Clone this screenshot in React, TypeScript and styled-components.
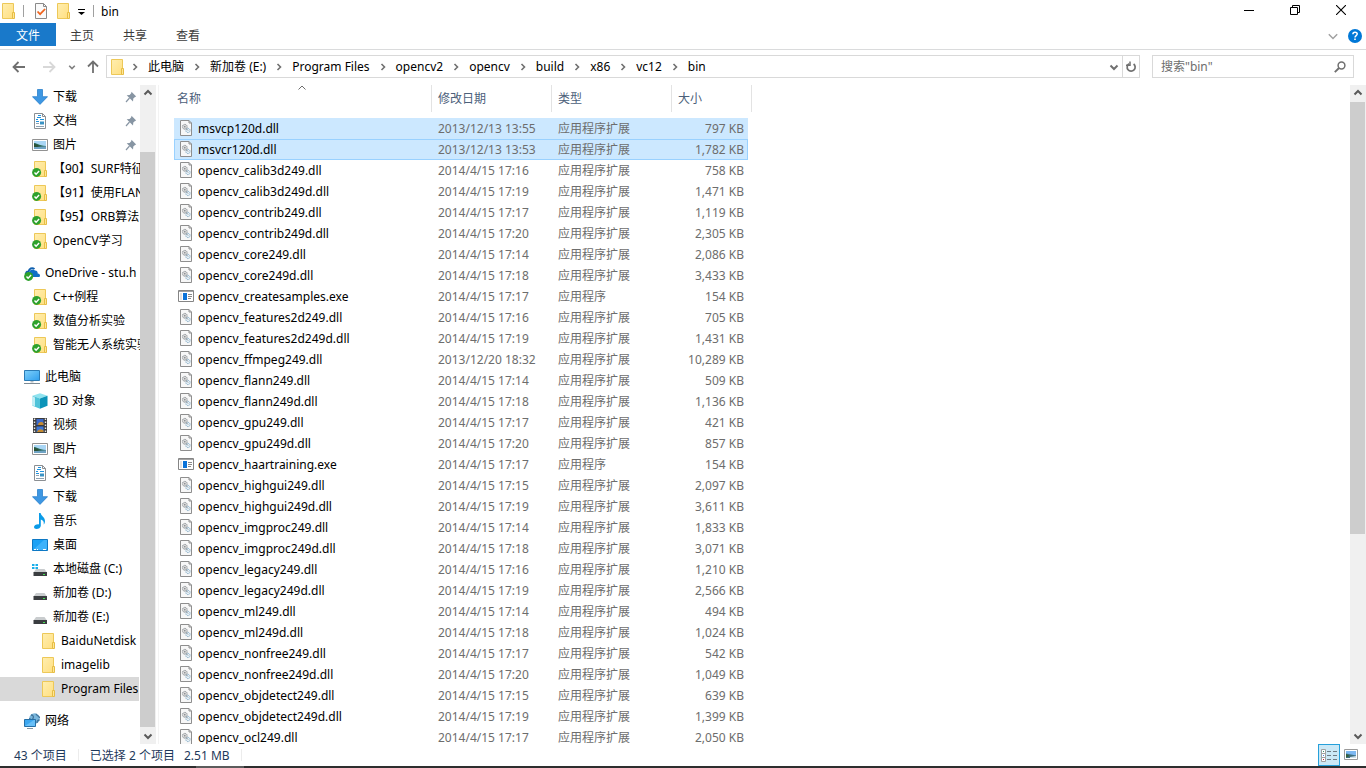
import React from "react";
import styled, { createGlobalStyle, css } from "styled-components";

const GlobalStyle = createGlobalStyle`
  * { box-sizing: border-box; }
  body {
    margin: 0;
    background: #fff;
    color: #000;
    font: 12px/20px "Noto Sans", "Noto Sans CJK SC", sans-serif;
  }
  button, input { font: inherit; color: inherit; }
  button { border: 0; padding: 0; background: none; }
  a { color: inherit; text-decoration: none; }
  svg { display: block; flex: none; }
`;

/* ---------- icons ---------- */

const Svg = ({ w = 16, h = 16, children }: { w?: number; h?: number; children: React.ReactNode }) => (
  <svg width={w} height={h} viewBox={`0 0 ${w} ${h}`} fill="none" aria-hidden="true">
    {children}
  </svg>
);

const folderShape = (
  <>
    <path d="M2.500 .5h11v15h-11z" fill="url(#folderFill)" stroke="#edc858" />
    <path d="M12.500 9.500h2v6h-2z" fill="#ffe696" stroke="#e6bd45" />
  </>
);

const syncBadge = (
  <>
    <circle cx="4.600" cy="11.400" r="4.500" fill="#2ea12c" />
    <path d="M2.500 11.600l1.600 1.700 3-3.300" stroke="#fff" strokeWidth="1.400" />
  </>
);

const FolderIcon = () => <Svg>{folderShape}</Svg>;
const SyncedFolderIcon = () => (
  <Svg>
    {folderShape}
    {syncBadge}
  </Svg>
);
const PropertiesIcon = () => (
  <Svg>
    <path d="M2.500 .5h8l3 3v12h-11z" fill="#fafafa" stroke="#8a8a8a" />
    <path d="M10.500 .5v3h3" stroke="#8a8a8a" />
    <path d="M4.500 8.500l2.600 2.700 5-5.200" stroke="#f0641e" strokeWidth="1.800" />
  </Svg>
);
const DownloadIcon = () => (
  <Svg>
    <path d="M5.500 .5h5v7.200h5L8 15.400.5 7.700h5z" fill="#3d97e3" stroke="#2b80cc" strokeWidth=".8" />
  </Svg>
);
const DocumentIcon = () => (
  <Svg>
    <path d="M2.500 .5h8l3 3v12h-11z" fill="#fff" stroke="#8b8f93" />
    <path d="M10.500 .5v3h3" stroke="#8b8f93" />
    <path d="M6 2.500h3M5 4.500h4M4 6.500h2M8 6.500h4M4 8.500h3" stroke="#1f92dd" />
    <path d="M4 10.500h3M4 13.500h8" stroke="#8fa3b3" />
    <path d="M8 8.500h4v3H8z" fill="#3a93c4" />
  </Svg>
);
const PictureIcon = () => (
  <Svg>
    <path d="M.5 2.500h15v11H.5z" fill="#fff" stroke="#929292" />
    <path d="M2 4h12v8H2z" fill="#a9d6f5" />
    <path d="M2 6c3 0 4 2.500 12 3v1H2z" fill="#2b6a58" />
    <path d="M2 7c3 .2 4 1.800 7 2.200L2 10.500z" fill="#2b5238" />
    <path d="M2 10.200l12-1V12H2z" fill="#6fa3c4" />
  </Svg>
);
const CloudIcon = () => (
  <Svg>
    <path d="M5 12V8.500C4.600 5 8.500 3 11 5.500c2.200.2 2.800 1.600 2.700 3 1.800.2 2.300 1.200 2.300 2.200 0 .8-.6 1.300-1.400 1.300z" fill="#0f6fc6" />
    <path d="M2 10c-.8-2 .8-3.700 2.500-3.500C5.200 3.500 8 2 10.500 4" stroke="#0f5fae" strokeWidth="1.800" />
    {syncBadge}
  </Svg>
);
const ComputerIcon = () => (
  <Svg>
    <path d="M.5 1.500h15v10H.5z" fill="url(#screenFill)" stroke="#2b7bb5" />
    <path d="M6.500 12h3v1.500h-3z" fill="#b5bcc2" />
    <path d="M0 14.500h16" stroke="#7d8a94" />
  </Svg>
);
const CubeIcon = () => (
  <Svg>
    <path d="M8 .3l7.500 2.500L8 5.500.5 2.800z" fill="#8fe3ef" />
    <path d="M.5 2.800L8 5.500v10.200L.5 12.800z" fill="#4fc3d9" />
    <path d="M0 3l3 1.500v9L0 12z" fill="#c2eef5" />
    <path d="M15.500 2.800L8 5.500v10.200l7.500-2.900z" fill="#0b93b8" />
  </Svg>
);
const VideoIcon = () => (
  <Svg>
    <path d="M1 1h14v15H1z" fill="#3b3b3b" />
    <path d="M2.500 1.500v14M13.500 1.500v14" stroke="#e8e8e8" strokeWidth="1.400" strokeDasharray="1.500 1.500" />
    <path d="M4.500 2h7v6h-7z" fill="#3a68c9" />
    <path d="M4.500 9.500h7V15h-7z" fill="#3a76d8" />
    <path d="M6 8c0-3 4-4 5.500-1.500V8zM5 15c1-3 4-3.500 6.500-1.500V15z" fill="#c58a2f" />
  </Svg>
);
const MusicIcon = () => (
  <Svg>
    <path d="M7 0h1.600c.4 3 4.400 4.200 4.400 8 0 1.500-.5 2.800-1.300 3.600.5-2.600-.5-4.300-2.900-5.100v6.200C8.800 14.700 6.500 16 4.500 16 3 16 2 15.200 2 14c0-1.700 2.600-3 5-2.600z" fill="#0a9be8" />
  </Svg>
);
const DesktopIcon = () => (
  <Svg>
    <path d="M.5 2.500h15v11H.5z" fill="#1ba1f5" stroke="#0d78c4" />
    <path d="M1 13L12 3h3v10z" fill="#3db2fb" />
    <path d="M2 12.500h2m1 0h1m5 0h3" stroke="#fff" />
  </Svg>
);
const diskShape = (
  <>
    <path d="M4 8h8.500l2.500 3.500H1.500z" fill="#c9ccce" />
    <path d="M1.500 11h13.500v4H1.500z" fill="#3a3d40" />
    <path d="M11 13.500h2" stroke="#45e052" />
  </>
);
const DiskIcon = () => <Svg>{diskShape}</Svg>;
const SystemDiskIcon = () => (
  <Svg>
    {diskShape}
    <path d="M0 3h2.500v2H0zM3.500 3H6v2H3.500zM0 6h2.500v2H0zM3.500 6H6v2H3.500z" fill="#1aaeea" />
  </Svg>
);
const NetworkIcon = () => (
  <Svg>
    <circle cx="10.500" cy="5.500" r="5.300" fill="#79b6dc" />
    <path d="M7 2c2 0 3 1.500 2 3.500S6 7 5.500 5M12 .8c.2 2 3.500 2 3.600 4.200M13 10c0-2 1-3 2.500-3" stroke="#42749a" strokeWidth="1.300" />
    <path d="M.5 6.500h11v7H.5z" fill="#3ca7f0" stroke="#256fa6" />
    <path d="M1 13l9-6h1v6z" fill="#67bff8" />
    <path d="M3 15.500h6" stroke="#8696a2" />
  </Svg>
);
const PinIcon = () => (
  <Svg w={12} h={12}>
    <path d="M6.500 .8l4.700 4.700-1.200.4-1.700 1.700-.3 2.900L1.700 4.300l2.900-.3 1.600-1.700z" fill="#8795a3" />
    <path d="M4.500 7L1 11" stroke="#8795a3" strokeWidth="1.200" />
  </Svg>
);
const DllIcon = () => (
  <Svg>
    <path d="M2.500 .5h8.500l2.500 2.500v12.500h-11z" fill="#f7f7f7" stroke="#8e8e8e" />
    <path d="M11 .5v2.500h2.500" stroke="#8e8e8e" />
    <circle cx="6.800" cy="6.800" r="2.400" fill="#dadada" stroke="#858b90" strokeDasharray="1 .5" />
    <circle cx="6.800" cy="6.800" r=".8" fill="#7a7f84" />
    <circle cx="10" cy="10.500" r="2.100" fill="#e6f1f8" stroke="#83a9c4" strokeDasharray="1 .5" />
    <path d="M8 8.500l2 2" stroke="#858b90" />
  </Svg>
);
const ExeIcon = () => (
  <Svg>
    <path d="M.5 2.500h15v11H.5z" fill="#fff" stroke="#858585" />
    <path d="M1 3.500h14" stroke="#a3a3a3" />
    <path d="M2 5h2v7H2z" fill="#e4e4e4" />
    <path d="M5 5h4v7H5z" fill="#0b73d9" />
    <path d="M10 6.500h4M10 8.500h4M10 10.500h3" stroke="#8a8a8a" />
  </Svg>
);
const Chevron = ({ size = 10, dir, color = "#5a5a5a", weight = 1.6 }: { size?: number; dir: "up" | "down" | "right"; color?: string; weight?: number }) => {
  const d = { up: "M1.500 6.500L5 3l3.500 3.500", down: "M1.500 3.500L5 7l3.500-3.500", right: "M3.500 2L6.500 5l-3 3" }[dir];
  return (
    <svg width={size} height={size} viewBox="0 0 10 10" fill="none" aria-hidden="true">
      <path d={d} stroke={color} strokeWidth={weight} />
    </svg>
  );
};
const Arrow = ({ turn, color }: { turn: number; color: string }) => (
  <Svg w={14} h={14}>
    <path transform={`rotate(${turn} 7 7)`} d="M13 7H2M6.500 2L1.500 7l5 5" stroke={color} strokeWidth="1.800" />
  </Svg>
);

/* ---------- window frame ---------- */

const Window = styled.div`
  display: flex;
  flex-direction: column;
  height: 100vh;
  overflow: hidden;
`;
const TitleBar = styled.header`
  display: flex;
  align-items: flex-start;
  height: 23px;
  padding-right: 2px;
`;
const QuickAccess = styled.div`
  display: flex;
  align-items: center;
  flex: 1;
  height: 22px;
`;
const Divider = styled.span<{ $space: number; $color?: string }>`
  align-self: center;
  width: 1px;
  height: 12px;
  margin: 0 ${(p) => p.$space}px;
  background: ${(p) => p.$color ?? "#a0a0a0"};
`;
const IconButton = styled.button<{ $w?: number }>`
  display: flex;
  align-items: center;
  justify-content: center;
  width: ${(p) => p.$w ?? 16}px;
  height: 22px;
`;
const CaptionButton = styled(IconButton)`
  width: 46px;
  height: 20px;
`;
const Title = styled.h1`
  margin: 0;
  padding: 2px 0 0 1px;
  font: inherit;
`;

const Ribbon = styled.nav`
  display: flex;
  height: 27px;
  padding-bottom: 3px;
  border-bottom: 1px solid #dadbdc;
`;
const Tab = styled.button<{ $primary?: boolean }>`
  width: ${(p) => (p.$primary ? 56 : 53)}px;
  padding: 2px ${(p) => (p.$primary ? 0 : 1)}px 0 0;
  color: ${(p) => (p.$primary ? "#fff" : "#3c3c3c")};
  background: ${(p) => (p.$primary ? "#1979ca" : "transparent")};
`;
const RibbonEnd = styled.div`
  display: flex;
  align-items: center;
  gap: 6px;
  margin-left: auto;
  padding: 3px 3px 0 0;
`;
const HelpButton = styled.button`
  width: 16px;
  height: 16px;
`;

/* ---------- address row ---------- */

const AddressRow = styled.div`
  display: flex;
  align-items: center;
  height: 35px;
  padding: 0 12px 2px 8px;
`;
const History = styled.div`
  display: flex;
  align-items: center;
  width: 98px;
`;
const UpButton = styled(IconButton)`
  margin-left: auto;
`;
const Box = styled.div`
  display: flex;
  align-items: center;
  height: 23px;
  border: 1px solid #d9d9d9;
`;
const AddressBox = styled(Box)`
  flex: 1;
  min-width: 0;
  margin-right: 12px;
  padding-left: 2px;
`;
const Crumbs = styled.ol`
  display: flex;
  flex: 1;
  min-width: 0;
  margin: 0;
  padding: 0;
  overflow: hidden;
  list-style: none;
  white-space: nowrap;
`;
const Crumb = styled.li`
  display: flex;
  align-items: center;

  svg {
    margin: 0 8px;
  }
  &:first-child svg {
    margin-left: 5px;
  }
`;
const RefreshButton = styled(IconButton)`
  border-left: 1px solid #d9d9d9;
`;
const SearchBox = styled(Box)`
  width: 202px;
  padding: 0 7px 0 8px;
`;
const SearchInput = styled.input`
  flex: 1;
  min-width: 0;
  padding: 0;
  border: 0;
  outline: 0;
  background: none;

  &::placeholder {
    color: #6d6d6d;
    opacity: 1;
  }
`;

/* ---------- panes ---------- */

const Panes = styled.div`
  display: flex;
  flex: 1;
  min-height: 0;
`;
const NavPane = styled.nav`
  width: 140px;
  padding-right: 1px;
  overflow: hidden;
`;
const NavGroup = styled.ul`
  margin: 0 0 8px;
  padding: 0;
  list-style: none;
`;
const NavLink = styled.a<{ $level: number; $selected?: boolean }>`
  display: flex;
  align-items: center;
  gap: 5px;
  height: 24px;
  padding-left: ${(p) => 24 + p.$level * 8}px;
  background: ${(p) => (p.$selected ? "#d9d9d9" : "transparent")};
  white-space: nowrap;
`;
const Pin = styled.span`
  margin-left: auto;
  padding-right: 2px;
`;
const ScrollBar = styled.div`
  display: flex;
  flex-direction: column;
  width: 16px;
  background: #f0f0f0;
`;
const ScrollButton = styled.button`
  display: flex;
  align-items: center;
  justify-content: center;
  width: 15px;
  height: 16px;
`;
const Thumb = styled.div`
  width: 15px;
  background: #cdcdcd;
`;
const Track = styled.div<{ $before: number; $size: number; $after: number }>`
  display: grid;
  flex: 1;
  grid-template-rows: ${(p) => `${p.$before}fr ${p.$size}fr ${p.$after}fr`};

  ${Thumb} {
    grid-row: 2;
  }
`;
const FilePane = styled.main`
  flex: 1;
  min-width: 0;
  margin-left: 2px;
  padding-left: 15px;
  border-left: 1px solid #f3f3f3;
  overflow: hidden;
`;

const FileTable = styled.table`
  width: 578px;
  table-layout: fixed;
  border-collapse: separate;
  border-spacing: 0;
  white-space: nowrap;
`;
const HeadCell = styled.th`
  position: relative;
  height: 27px;
  padding: 0 0 0 6px;
  border-right: 1px solid #e3e3e3;
  color: #4c607a;
  font-weight: 400;
  text-align: left;

  &:first-child {
    padding-left: 3px;
  }
`;
const SortMark = styled.span`
  position: absolute;
  top: -2px;
  left: 50%;
  margin-left: -6px;
`;
const HeadGap = styled.tr`
  height: 6px;
`;
const Cell = styled.td<{ $right?: boolean }>`
  height: 21px;
  padding: 0 4px 0 6px;
  color: #6d6d6d;
  line-height: 21px;
  text-align: ${(p) => (p.$right ? "right" : "left")};
  vertical-align: top;
`;
const NameCell = styled(Cell)`
  padding-left: 4px;
  color: #000;
`;
const FileName = styled.span`
  display: flex;
  align-items: flex-start;
  gap: 4px;

  svg {
    margin-top: 2px;
  }
`;
const FileRow = styled.tr<{ $selected: boolean; $focused: boolean }>`
  ${(p) =>
    p.$selected &&
    css`
      ${Cell} {
        background: #cce8ff;
      }
    `}
  ${(p) =>
    p.$focused &&
    css`
      ${Cell} {
        box-shadow: inset 0 1px #99d1ff, inset 0 -1px #99d1ff;
      }
      ${Cell}:first-child {
        box-shadow: inset 0 1px #99d1ff, inset 0 -1px #99d1ff, inset 1px 0 #99d1ff;
      }
      ${Cell}:last-child {
        box-shadow: inset 0 1px #99d1ff, inset 0 -1px #99d1ff, inset -1px 0 #99d1ff;
      }
    `}
`;

/* ---------- status bar ---------- */

const StatusBar = styled.footer`
  display: flex;
  align-items: flex-end;
  height: 22px;
  padding: 0 4px 0 14px;
  color: #1e395b;
`;
const Selection = styled.span`
  display: flex;
  gap: 9px;
`;
const ViewButtons = styled.div`
  display: flex;
  margin-left: auto;
`;
const ViewButton = styled(IconButton)<{ $active?: boolean }>`
  border: 1px solid ${(p) => (p.$active ? "#26a0da" : "transparent")};
  background: ${(p) => (p.$active ? "#cbe8f6" : "transparent")};
`;
const TaskbarEdge = styled.div`
  height: 2px;
  padding-left: 196px;
  background: #2e2e2e;

  &::before {
    content: "";
    display: block;
    width: 48px;
    height: 2px;
    background: #5c5c5c;
  }
`;

/* ---------- data ---------- */

type NavItem = { label: string; icon: React.ComponentType; level: number; pinned?: boolean; selected?: boolean };

const navGroups: NavItem[][] = [
  [
    { label: "下载", icon: DownloadIcon, level: 1, pinned: true },
    { label: "文档", icon: DocumentIcon, level: 1, pinned: true },
    { label: "图片", icon: PictureIcon, level: 1, pinned: true },
    { label: "【90】SURF特征", icon: SyncedFolderIcon, level: 1 },
    { label: "【91】使用FLANN", icon: SyncedFolderIcon, level: 1 },
    { label: "【95】ORB算法", icon: SyncedFolderIcon, level: 1 },
    { label: "OpenCV学习", icon: SyncedFolderIcon, level: 1 },
  ],
  [
    { label: "OneDrive - stu.h", icon: CloudIcon, level: 0 },
    { label: "C++例程", icon: SyncedFolderIcon, level: 1 },
    { label: "数值分析实验", icon: SyncedFolderIcon, level: 1 },
    { label: "智能无人系统实验", icon: SyncedFolderIcon, level: 1 },
  ],
  [
    { label: "此电脑", icon: ComputerIcon, level: 0 },
    { label: "3D 对象", icon: CubeIcon, level: 1 },
    { label: "视频", icon: VideoIcon, level: 1 },
    { label: "图片", icon: PictureIcon, level: 1 },
    { label: "文档", icon: DocumentIcon, level: 1 },
    { label: "下载", icon: DownloadIcon, level: 1 },
    { label: "音乐", icon: MusicIcon, level: 1 },
    { label: "桌面", icon: DesktopIcon, level: 1 },
    { label: "本地磁盘 (C:)", icon: SystemDiskIcon, level: 1 },
    { label: "新加卷 (D:)", icon: DiskIcon, level: 1 },
    { label: "新加卷 (E:)", icon: DiskIcon, level: 1 },
    { label: "BaiduNetdisk", icon: FolderIcon, level: 2 },
    { label: "imagelib", icon: FolderIcon, level: 2 },
    { label: "Program Files", icon: FolderIcon, level: 2, selected: true },
  ],
  [{ label: "网络", icon: NetworkIcon, level: 0 }],
];

const crumbs = ["此电脑", "新加卷 (E:)", "Program Files", "opencv2", "opencv", "build", "x86", "vc12", "bin"];

const files: [name: string, modified: string, size: string][] = [
  ["msvcp120d.dll", "2013/12/13 13:55", "797"],
  ["msvcr120d.dll", "2013/12/13 13:53", "1,782"],
  ["opencv_calib3d249.dll", "2014/4/15 17:16", "758"],
  ["opencv_calib3d249d.dll", "2014/4/15 17:19", "1,471"],
  ["opencv_contrib249.dll", "2014/4/15 17:17", "1,119"],
  ["opencv_contrib249d.dll", "2014/4/15 17:20", "2,305"],
  ["opencv_core249.dll", "2014/4/15 17:14", "2,086"],
  ["opencv_core249d.dll", "2014/4/15 17:18", "3,433"],
  ["opencv_createsamples.exe", "2014/4/15 17:17", "154"],
  ["opencv_features2d249.dll", "2014/4/15 17:16", "705"],
  ["opencv_features2d249d.dll", "2014/4/15 17:19", "1,431"],
  ["opencv_ffmpeg249.dll", "2013/12/20 18:32", "10,289"],
  ["opencv_flann249.dll", "2014/4/15 17:14", "509"],
  ["opencv_flann249d.dll", "2014/4/15 17:18", "1,136"],
  ["opencv_gpu249.dll", "2014/4/15 17:17", "421"],
  ["opencv_gpu249d.dll", "2014/4/15 17:20", "857"],
  ["opencv_haartraining.exe", "2014/4/15 17:17", "154"],
  ["opencv_highgui249.dll", "2014/4/15 17:15", "2,097"],
  ["opencv_highgui249d.dll", "2014/4/15 17:19", "3,611"],
  ["opencv_imgproc249.dll", "2014/4/15 17:14", "1,833"],
  ["opencv_imgproc249d.dll", "2014/4/15 17:18", "3,071"],
  ["opencv_legacy249.dll", "2014/4/15 17:16", "1,210"],
  ["opencv_legacy249d.dll", "2014/4/15 17:19", "2,566"],
  ["opencv_ml249.dll", "2014/4/15 17:14", "494"],
  ["opencv_ml249d.dll", "2014/4/15 17:18", "1,024"],
  ["opencv_nonfree249.dll", "2014/4/15 17:17", "542"],
  ["opencv_nonfree249d.dll", "2014/4/15 17:20", "1,049"],
  ["opencv_objdetect249.dll", "2014/4/15 17:15", "639"],
  ["opencv_objdetect249d.dll", "2014/4/15 17:19", "1,399"],
  ["opencv_ocl249.dll", "2014/4/15 17:17", "2,050"],
];

/* ---------- parts ---------- */

const Scroll = ({ before, size, after }: { before: number; size: number; after: number }) => (
  <ScrollBar>
    <ScrollButton aria-label="向上滚动">
      <Chevron dir="up" weight={2} />
    </ScrollButton>
    <Track $before={before} $size={size} $after={after}>
      <Thumb />
    </Track>
    <ScrollButton aria-label="向下滚动">
      <Chevron dir="down" weight={2} />
    </ScrollButton>
  </ScrollBar>
);

export default function App() {
  return (
    <Window>
      <GlobalStyle />
      <svg width="0" height="0" style={{ position: "absolute" }} aria-hidden="true">
        <defs>
          <linearGradient id="folderFill" x1="0" y1="0" x2="1" y2="1">
            <stop offset="0" stopColor="#ffeeb0" />
            <stop offset="1" stopColor="#ffdf80" />
          </linearGradient>
          <linearGradient id="screenFill" x1="0" y1="0" x2="1" y2="1">
            <stop offset="0" stopColor="#7fd0fb" />
            <stop offset="1" stopColor="#2f9fee" />
          </linearGradient>
        </defs>
      </svg>

      <TitleBar>
        <QuickAccess>
          <FolderIcon />
          <Divider $space={7} />
          <IconButton $w={20} aria-label="属性">
            <PropertiesIcon />
          </IconButton>
          <IconButton $w={24} aria-label="新建文件夹">
            <FolderIcon />
          </IconButton>
          <IconButton $w={12} aria-label="自定义快速访问工具栏">
            <Svg w={8} h={8}>
              <path d="M1 2.500h7" stroke="#000" />
              <path d="M1 5h7L4.500 8z" fill="#000" />
            </Svg>
          </IconButton>
          <Divider $space={6} />
          <Title>bin</Title>
        </QuickAccess>
        <CaptionButton aria-label="最小化">
          <Svg w={10} h={10}>
            <path d="M0 5.500h10" stroke="#000" />
          </Svg>
        </CaptionButton>
        <CaptionButton aria-label="向下还原">
          <Svg w={10} h={10}>
            <path d="M.5 2.500h7v7h-7zM2.500 2.500v-2h7v7h-2" stroke="#000" />
          </Svg>
        </CaptionButton>
        <CaptionButton aria-label="关闭">
          <Svg w={10} h={10}>
            <path d="M0 0l10 10M10 0L0 10" stroke="#000" strokeWidth="1.100" />
          </Svg>
        </CaptionButton>
      </TitleBar>

      <Ribbon>
        <Tab $primary>文件</Tab>
        <Tab>主页</Tab>
        <Tab>共享</Tab>
        <Tab>查看</Tab>
        <RibbonEnd>
          <IconButton $w={16} aria-label="展开功能区">
            <Chevron dir="down" color="#a0a0a0" weight={1.2} size={12} />
          </IconButton>
          <HelpButton aria-label="帮助">
            <Svg>
              <circle cx="8" cy="8" r="7" fill="#0078d7" />
              <path d="M5.900 6.200c0-2.800 4.300-2.600 4.300-.2C10.200 7.600 8 7.500 8 9.400" stroke="#fff" strokeWidth="1.500" />
              <path d="M7.200 10.500h1.600v1.600H7.200z" fill="#fff" />
            </Svg>
          </HelpButton>
        </RibbonEnd>
      </Ribbon>

      <AddressRow>
        <History>
          <IconButton $w={22} aria-label="后退">
            <Arrow turn={0} color="#707070" />
          </IconButton>
          <IconButton $w={38} aria-label="前进">
            <Arrow turn={180} color="#d8d8d8" />
          </IconButton>
          <IconButton $w={8} aria-label="最近位置">
            <Chevron dir="down" color="#808080" size={8} weight={2} />
          </IconButton>
          <UpButton $w={26} aria-label="上移">
            <Arrow turn={90} color="#707070" />
          </UpButton>
        </History>
        <AddressBox>
          <FolderIcon />
          <Crumbs>
            {crumbs.map((crumb) => (
              <Crumb key={crumb}>
                <Chevron dir="right" color="#707070" />
                <a href="#">{crumb}</a>
              </Crumb>
            ))}
          </Crumbs>
          <IconButton aria-label="以前的位置">
            <Chevron dir="down" color="#707070" weight={2} />
          </IconButton>
          <RefreshButton $w={17} aria-label="刷新">
            <Svg w={12} h={12}>
              <path d="M4 2.800a4 4 0 1 0 4.600.2" stroke="#707070" strokeWidth="1.700" />
              <path d="M5 .5v3.800H1" stroke="#707070" strokeWidth="1.500" />
            </Svg>
          </RefreshButton>
        </AddressBox>
        <SearchBox>
          <SearchInput type="text" aria-label="搜索" placeholder={'搜索"bin"'} />
          <Svg w={12} h={12}>
            <circle cx="7.500" cy="4.500" r="3.400" stroke="#707070" strokeWidth="1.500" />
            <path d="M5 7L.8 11.200" stroke="#707070" strokeWidth="1.900" />
          </Svg>
        </SearchBox>
      </AddressRow>

      <Panes>
        <NavPane>
          {navGroups.map((group) => (
            <NavGroup key={group[0].label + group.length}>
              {group.map(({ label, icon: Icon, level, pinned, selected }) => (
                <li key={label}>
                  <NavLink href="#" $level={level} $selected={selected}>
                    <Icon />
                    {label}
                    {pinned && (
                      <Pin>
                        <PinIcon />
                      </Pin>
                    )}
                  </NavLink>
                </li>
              ))}
            </NavGroup>
          ))}
        </NavPane>
        <Scroll before={51} size={575} after={1} />

        <FilePane>
          <FileTable>
            <colgroup>
              <col width={258} />
              <col width={120} />
              <col width={120} />
              <col width={76} />
              <col width={4} />
            </colgroup>
            <thead>
              <tr>
                <HeadCell>
                  名称
                  <SortMark>
                    <Chevron dir="up" color="#6d6d6d" weight={1} />
                  </SortMark>
                </HeadCell>
                <HeadCell>修改日期</HeadCell>
                <HeadCell>类型</HeadCell>
                <HeadCell colSpan={2}>大小</HeadCell>
              </tr>
              <HeadGap />
            </thead>
            <tbody>
              {files.map(([name, modified, size], i) => {
                const exe = name.endsWith(".exe");
                return (
                  <FileRow key={name} $selected={i < 2} $focused={i === 1}>
                    <NameCell>
                      <FileName>
                        {exe ? <ExeIcon /> : <DllIcon />}
                        {name}
                      </FileName>
                    </NameCell>
                    <Cell>{modified}</Cell>
                    <Cell>{exe ? "应用程序" : "应用程序扩展"}</Cell>
                    <Cell $right>{size} KB</Cell>
                  </FileRow>
                );
              })}
            </tbody>
          </FileTable>
        </FilePane>
        <Scroll before={1} size={432} after={194} />
      </Panes>

      <StatusBar>
        <span>43 个项目</span>
        <Divider $space={11} $color="#ececec" />
        <Selection>
          <span>已选择 2 个项目</span>
          <span>2.51 MB</span>
        </Selection>
        <Divider $space={11} $color="#ececec" />
        <ViewButtons>
          <ViewButton $w={22} $active aria-label="详细信息">
            <Svg>
              <path d="M.5 2.500h4v4h-4zM.5 6.500h4v4h-4zM.5 10.500h4v4h-4z" fill="#fff" stroke="#a0a0a0" />
              <path d="M2 4.500h1" stroke="#3d8f6a" />
              <path d="M2 8.500h1" stroke="#4a7fe0" />
              <path d="M2 12.500h1" stroke="#c8203a" />
              <path d="M6 4.500h4m2 0h4M6 8.500h4m2 0h4M6 12.500h4m2 0h4" stroke="#6e7b84" />
            </Svg>
          </ViewButton>
          <ViewButton $w={22} aria-label="大缩略图">
            <Svg w={14} h={12}>
              <path d="M.5 .5h13v10H.5z" fill="#fff" stroke="#9a9a9a" />
              <path d="M2 2h10v7H2z" fill="#7db8f2" />
              <path d="M2 4.500l10 2V9H2z" fill="#3f6f80" />
              <path d="M2 5l4 2-4 1.500z" fill="#35603a" />
              <path d="M6 8l6-1v2H6z" fill="#cfe0ea" />
            </Svg>
          </ViewButton>
        </ViewButtons>
      </StatusBar>
      <TaskbarEdge />
    </Window>
  );
}
